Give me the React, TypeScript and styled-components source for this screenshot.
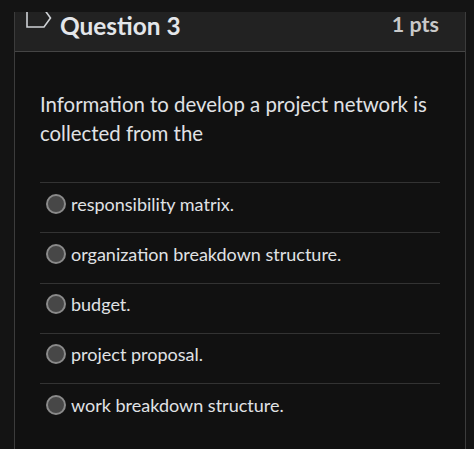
import React from "react";
import styled, { createGlobalStyle } from "styled-components";

const Global = createGlobalStyle`
  html, body { margin: 0; padding: 0; background: #141414; }
  body { font-family: Lato, "Noto Sans", sans-serif; color: #e2e4e7; }
`;

const TopStrip = styled.div`
  height: 12px;
  background: #141414;
`;

const Card = styled.section`
  margin-left: 14px;
  width: 450px;
  border-left: 1px solid #3c3c3c;
  border-right: 1px solid #3c3c3c;
  background: #111111;
  min-height: 437px;
`;

const Header = styled.header`
  height: 39px;
  background: #222222;
  border-bottom: 1px solid #454545;
  display: flex;
  align-items: flex-start;
  overflow: hidden;
  padding: 0 26px 0 10px;
`;

const FlagIcon = styled.svg`
  flex: none;
  width: 28px;
  height: 30px;
  margin-top: -12px;
  margin-right: 7px;
`;

const Title = styled.h2`
  margin: -1px 0 0;
  font-size: 24.4px;
  font-weight: 700;
  line-height: 30px;
  color: #e3e6ea;
  flex: 1;
`;

const Points = styled.span`
  margin-top: -3px;
  font-size: 21.5px;
  font-weight: 700;
  line-height: 30px;
  color: #c9c9c9;
`;

const Body = styled.div`
  padding: 38px 25px 0 25px;
`;

const QuestionText = styled.p`
  margin: 0 0 34px;
  font-size: 20.4px;
  line-height: 29px;
  color: #e0e2e5;
`;

const Options = styled.ul`
  list-style: none;
  margin: 0;
  padding: 0;
`;

const Option = styled.li`
  height: 41.25px;
  padding: 0 0 8px 6px;
  border-top: 1px solid #333333;
  display: flex;
  align-items: center;
  gap: 5px;
`;

const Radio = styled.span`
  flex: none;
  width: 16px;
  height: 16px;
  border-radius: 50%;
  border: 2px solid #8a8a8a;
  background: #474747;
`;

const OptionLabel = styled.span`
  font-size: 18px;
  color: #e0e2e5;
  line-height: 24px;
`;

const options = [
  "responsibility matrix.",
  "organization breakdown structure.",
  "budget.",
  "project proposal.",
  "work breakdown structure.",
];

export default function App() {
  return (
    <>
      <Global />
      <TopStrip />
      <Card>
        <Header>
          <FlagIcon viewBox="0 0 28 30" fill="none">
            <path
              d="M2 9 L2 27 L19 27 L25.5 18 L19 9 Z"
              stroke="#cfd2d6"
              strokeWidth="1.6"
              strokeLinejoin="miter"
            />
          </FlagIcon>
          <Title>Question 3</Title>
          <Points>1 pts</Points>
        </Header>
        <Body>
          <QuestionText>
            Information to develop a project network is collected from the
          </QuestionText>
          <Options>
            {options.map((o) => (
              <Option key={o}>
                <Radio />
                <OptionLabel>{o}</OptionLabel>
              </Option>
            ))}
          </Options>
        </Body>
      </Card>
    </>
  );
}
